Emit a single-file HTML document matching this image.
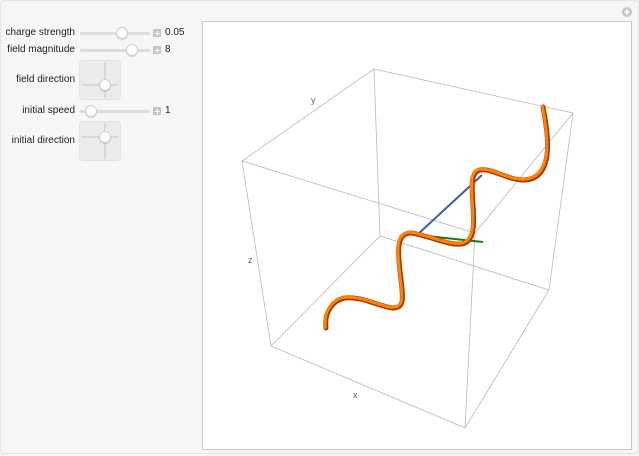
<!DOCTYPE html>
<html><head><style>
body{margin:0;width:639px;height:456px;background:#f5f5f5;font-family:"Liberation Sans",sans-serif;font-size:10px;color:#222;position:relative;overflow:hidden}
.frame{position:absolute;left:0;top:0;width:637px;height:452px;border:1px solid #e4e4e4;border-radius:4px;background:#f6f6f6}
.lbl{position:absolute;right:564px;text-align:right;white-space:nowrap}
.track{position:absolute;left:80px;width:70px;height:3px;background:#dcdcdc;border-radius:2px}
.thumb{position:absolute;width:10px;height:10px;border-radius:50%;background:#fff;border:1px solid #cfcfcf;box-shadow:0 1px 1px rgba(0,0,0,.15)}
.plus{position:absolute;left:153px;width:8px;height:8px;background:#c4c4c4;border-radius:1px}
.plus:before{content:"";position:absolute;left:1.5px;top:3.5px;width:5px;height:1px;background:#fff}
.plus:after{content:"";position:absolute;left:3.5px;top:1.5px;width:1px;height:5px;background:#fff}
.val{position:absolute;left:165px}
.pad{position:absolute;left:79px;width:40px;height:38px;background:#ececec;border:1px solid #e2e2e2;border-radius:4px}
.pad .h{position:absolute;left:2px;right:2px;height:2px;background:#d8d8d8}
.pad .v{position:absolute;top:1px;bottom:1px;width:2px;background:#d8d8d8}
.plot{position:absolute;left:202px;top:21px;width:428px;height:427px;background:#fff;border:1px solid #c8c8c8}
</style></head><body>
<div class="frame"></div>
<svg style="position:absolute;left:621px;top:6px" width="12" height="12"><circle cx="6" cy="6" r="5" fill="#c4c4c4"/><path d="M6 3.3v5.4M3.3 6h5.4" stroke="#fff" stroke-width="1.6"/></svg>

<div class="lbl" style="top:27px">charge strength</div>
<div class="track" style="top:32px"></div><div class="thumb" style="left:116px;top:27px"></div>
<div class="plus" style="top:29px"></div><div class="val" style="top:27px">0.05</div>

<div class="lbl" style="top:44px">field magnitude</div>
<div class="track" style="top:49px"></div><div class="thumb" style="left:126px;top:44px"></div>
<div class="plus" style="top:46px"></div><div class="val" style="top:44px">8</div>

<div class="lbl" style="top:74px">field direction</div>
<div class="pad" style="top:60px"><div class="h" style="top:23px"></div><div class="v" style="left:24px"></div><div class="thumb" style="left:19px;top:18px"></div></div>

<div class="lbl" style="top:105px">initial speed</div>
<div class="track" style="top:110px"></div><div class="thumb" style="left:85px;top:105px"></div>
<div class="plus" style="top:107px"></div><div class="val" style="top:105px">1</div>

<div class="lbl" style="top:135px">initial direction</div>
<div class="pad" style="top:121px"><div class="h" style="top:14px"></div><div class="v" style="left:24px"></div><div class="thumb" style="left:19px;top:9px"></div></div>

<div class="plot"></div>
<svg style="position:absolute;left:0;top:0" width="639" height="456">
<g stroke="#b8b8b8" stroke-width="0.8" fill="none">
<path d="M242 161L374 69L573 113L475 233Z"/>
<path d="M271 346L380 236L549 290L465 428Z"/>
<path d="M242 161L271 346M374 69L380 236M573 113L549 290M475 233L465 428"/>
</g>
<g font-family="Liberation Sans,sans-serif" font-size="9" fill="#666">
<text x="311" y="103">y</text><text x="248" y="263">z</text><text x="353" y="398">x</text></g>
<path d="M417 235L482 175" stroke="#3a5cb0" stroke-width="2"/>
<path d="M417 235L483 242" stroke="#1a7a1a" stroke-width="2"/>
<path d="M326 328C324 312 333 300 345 298C362 296 380 307 393 308C405 308 403 297 401 280C399 262 396 242 403 236C408 231 414 233 424 236C440 240 455 247 465 243C475 238 474 222 473 205C472 188 470 172 480 170C492 168 508 180 523 180C538 180 545 170 547 155C549 138 545 118 543 107" fill="none" stroke="#a33a00" stroke-width="5" stroke-linecap="round"/>
<path d="M326 328C324 312 333 300 345 298C362 296 380 307 393 308C405 308 403 297 401 280C399 262 396 242 403 236C408 231 414 233 424 236C440 240 455 247 465 243C475 238 474 222 473 205C472 188 470 172 480 170C492 168 508 180 523 180C538 180 545 170 547 155C549 138 545 118 543 107" fill="none" stroke="#ff8200" stroke-width="3" stroke-linecap="round" transform="translate(-0.7,-0.7)"/>
</svg>
</body></html>
